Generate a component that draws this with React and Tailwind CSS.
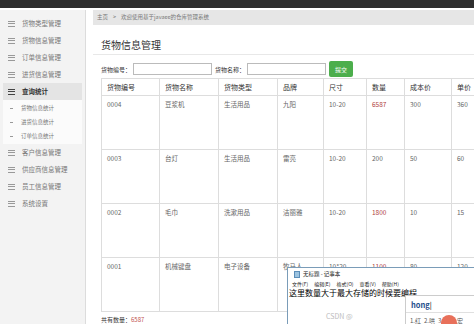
import React from "react";

const menu = ["货物类型管理", "货物信息管理", "订单信息管理", "进货信息管理"];
const subMenu = ["货物信息统计", "进货信息统计", "订单信息统计"];
const menu2 = ["客户信息管理", "供应商信息管理", "员工信息管理", "系统设置"];

const cols = [
  { name: "货物编号", w: "w-[58px]" },
  { name: "货物名称", w: "w-[59px]" },
  { name: "货物类型", w: "w-[59px]" },
  { name: "品牌", w: "w-[46px]" },
  { name: "尺寸", w: "w-[43px]" },
  { name: "数量", w: "w-[38px]" },
  { name: "成本价", w: "w-[47px]" },
  { name: "单价", w: "w-[40px]" },
];

const rows = [
  ["0004", "豆浆机", "生活用品", "九阳", "10-20", "6587", "300", "360"],
  ["0003", "台灯", "生活用品", "雷亮", "10-20", "200", "50", "60"],
  ["0002", "毛巾", "洗漱用品", "洁丽雅", "10-20", "1800", "10", "15"],
  ["0001", "机械键盘", "电子设备", "牧马人", "10*20", "1100", "80", "120"],
];

function Bars({ dark }) {
  const c = dark ? "bg-[#444]" : "bg-[#999]";
  return (
    <span className="flex flex-col gap-[1.5px] w-[7px] mr-[7px]">
      <span className={`h-px ${c}`} />
      <span className={`h-px ${c}`} />
      <span className={`h-px ${c}`} />
    </span>
  );
}

function Sidebar() {
  return (
    <div className="w-[86px] shrink-0 bg-[#f3f3f3] border-r border-[#dcdcdc] pt-[5px] text-[6.5px] text-[#777]">
      {menu.map((m) => (
        <div key={m} className="h-[17px] flex items-center pl-[8px]">
          <Bars />
          {m}
        </div>
      ))}
      <div className="h-[17px] flex items-center bg-[#e4e4e4] text-[#333] font-bold mx-[3px] pl-[5px]">
        <Bars dark />
        查询统计
      </div>
      <div className="bg-[#fbfbfb] mx-[3px] py-px text-[5.5px]">
        {subMenu.map((s) => (
          <div key={s} className="h-[14px] flex items-center pl-[7px]">
            <span className="w-[3px] h-px bg-[#999] mr-[8px]" />
            {s}
          </div>
        ))}
      </div>
      {menu2.map((m) => (
        <div key={m} className="h-[17px] flex items-center pl-[8px]">
          <Bars />
          {m}
        </div>
      ))}
    </div>
  );
}

function Main() {
  return (
    <div className="flex-1 min-w-0 pl-[7px] overflow-hidden">
      <div className="h-[15px] bg-[#e6e6e6] flex items-center pl-[4px] text-[5.5px] text-[#777]">
        <span>主页</span>
        <span className="mx-[5px]">&gt;</span>
        <span>欢迎使用基于javaee的仓库管理系统</span>
      </div>
      <div className="pl-[8px] pt-[12px] pb-[2px] text-[10px] text-[#333] border-b border-[#e8e8e8]">
        货物信息管理
      </div>
      <div className="pl-[8px] mt-[6px] flex items-center text-[6px] text-[#333]">
        <span className="w-[32px]">货物编号：</span>
        <div className="w-[79px] h-[12px] border border-[#bbb] bg-white" />
        <span className="w-[35px] pl-[3px]">货物名称：</span>
        <div className="w-[79px] h-[12px] border border-[#bbb] bg-white" />
        <div className="ml-[3px] w-[24px] h-[16px] rounded-[2px] bg-[#4cae4c] text-white flex items-center justify-center">
          提交
        </div>
      </div>
      <table className="ml-[8px] mt-px table-fixed border-collapse w-[390px] text-left">
        <thead>
          <tr className="h-[17px]">
            {cols.map((c) => (
              <th key={c.name} className={`${c.w} border border-[#ddd] pl-[5px] font-normal text-[7px] text-[#333]`}>
                {c.name}
              </th>
            ))}
          </tr>
        </thead>
        <tbody>
          {rows.map((r) => (
            <tr key={r[0]} className="h-[54px]">
              {r.map((v, i) => (
                <td
                  key={i}
                  className={`border border-[#ddd] pl-[5px] pt-[4px] align-top text-[6.5px] ${
                    i === 5 && v !== "200" ? "text-[#b0413e]" : "text-[#666]"
                  }`}
                >
                  {v}
                </td>
              ))}
            </tr>
          ))}
        </tbody>
      </table>
      <div className="pl-[8px] mt-[3px] text-[6px] text-[#333]">
        共有数量：<span className="text-[#c0504d]">6587</span>
      </div>
    </div>
  );
}

function Notepad() {
  return (
    <div className="absolute left-[287px] top-[267px] w-[200px] h-[70px] bg-white border-l border-t border-[#7a9cb8]">
      <div className="flex items-center h-[12px] pl-[6px] text-[5.5px] text-[#222]">
        <span className="w-[6px] h-[7px] bg-[#9cc3e0] border border-[#5b8db8] mr-[3px]" />
        无标题 - 记事本
      </div>
      <div className="flex gap-[6px] pl-[4px] text-[5px] text-[#222] h-[8px] items-center">
        <span>文件(F)</span>
        <span>编辑(E)</span>
        <span>格式(O)</span>
        <span>查看(V)</span>
        <span>帮助(H)</span>
      </div>
      <div className="pl-[1px] text-[8px] leading-[10px] text-black">这里数量大于最大存储的时候要编程</div>
    </div>
  );
}

function Ime() {
  return (
    <div className="absolute left-[405px] top-[295px] w-[80px] h-[40px] bg-white border-l border-t border-[#ccc]">
      <div className="pl-[5px] pt-[3px] text-[7.5px] font-bold text-[#1f4e8c] border-b border-[#e0e0e0] pb-[2px]">
        hong<span className="font-normal text-black">|</span>
      </div>
      <div className="pl-[4px] pt-[3px] flex gap-[3px] text-[6px] text-[#555]">
        <span>1.红</span>
        <span>2.哄</span>
        <span>3.洪</span>
        <span>4.宏</span>
      </div>
    </div>
  );
}

export default function App() {
  return (
    <div className="relative w-[474px] h-[324px] overflow-hidden bg-white font-['Noto_Sans_CJK_SC','Liberation_Sans',sans-serif]">
      <div className="h-[8px] bg-[#2e2e2e]" />
      <div className="flex pt-[2px]">
        <Sidebar />
        <Main />
      </div>
      <Notepad />
      <Ime />
      <div className="absolute left-[326px] top-[311px] text-[7px] text-[#bbb]">CSDN @</div>
      <div className="absolute left-[441px] top-[315px] w-[16px] h-[16px] rounded-full bg-[#e8705a]" />
    </div>
  );
}
